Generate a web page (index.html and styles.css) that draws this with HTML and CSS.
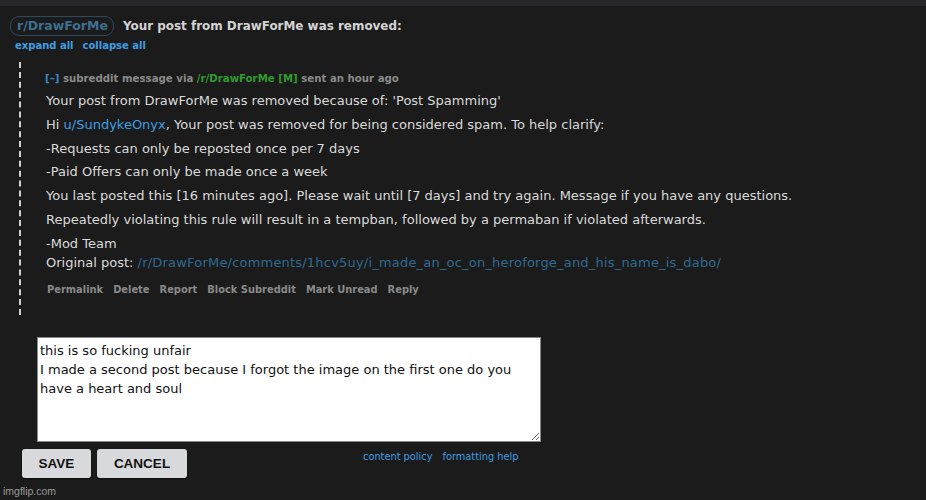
FILE: index.html
```html
<!DOCTYPE html>
<html>
<head>
<meta charset="utf-8">
<link rel="stylesheet" href="styles.css">
</head>
<body>
<div class="topbar"></div>
<div class="head">
  <span class="pill">r/DrawForMe</span>
  <span class="title">Your post from DrawForMe was removed:</span>
</div>
<div class="expand"><a>expand all</a><a>collapse all</a></div>
<div class="thread">
  <div class="msg">
    <div class="tagline"><span class="blue">[–]</span> subreddit message via <span class="green">/r/DrawForMe</span> <span class="green">[M]</span> sent an hour ago</div>
    <div class="md">
      <p>Your post from DrawForMe was removed because of: 'Post Spamming'</p>
      <p>Hi <span class="link">u/SundykeOnyx</span>, Your post was removed for being considered spam. To help clarify:</p>
      <p>-Requests can only be reposted once per 7 days</p>
      <p>-Paid Offers can only be made once a week</p>
      <p>You last posted this [16 minutes ago]. Please wait until [7 days] and try again. Message if you have any questions.</p>
      <p>Repeatedly violating this rule will result in a tempban, followed by a permaban if violated afterwards.</p>
      <p>-Mod Team<br>Original post: <span class="link dim">/r/DrawForMe/comments/1hcv5uy/i_made_an_oc_on_heroforge_and_his_name_is_dabo/</span></p>
    </div>
    <div class="buttons"><span>Permalink</span><span>Delete</span><span>Report</span><span>Block Subreddit</span><span>Mark Unread</span><span>Reply</span></div>
  </div>
</div>
<div class="reply">
  <textarea class="box">this is so fucking unfair
I made a second post because I forgot the image on the first one do you have a heart and soul</textarea>
  <div class="bottom">
    <div class="btns"><button class="btn save">SAVE</button><button class="btn cancel">CANCEL</button></div>
    <div class="help"><a>content policy</a><a>formatting help</a></div>
  </div>
</div>
<div class="wm">imgflip.com</div>
</body>
</html>
```

FILE: styles.css
```css
html, body {
  margin: 0;
  padding: 0;
  background: #1b1b1b;
  font-family: "DejaVu Sans", Verdana, sans-serif;
  width: 926px;
  height: 500px;
  overflow: hidden;
}
.topbar {
  height: 6px;
  background: #28282b;
}
.head {
  display: flex;
  align-items: center;
  gap: 9px;
  margin: 10px 0 0 10px;
  height: 20px;
}
.pill {
  border: 1px solid #2d4a60;
  border-radius: 9px;
  padding: 1px 5px 1px 6px;
  color: #3d6f92;
  font-weight: bold;
  font-size: 12.5px;
  line-height: 16px;
}
.title {
  color: #d3d3d3;
  font-weight: bold;
  font-size: 11.95px;
}
.expand {
  margin: 4px 0 0 15px;
  font-size: 10px;
  font-weight: bold;
  display: flex;
  gap: 9px;
  color: #3f9ee3;
  height: 14px;
}
.thread {
  margin: 8px 0 0 19px;
  border-left: 2px dashed #d0d0d0;
  padding: 10px 0 0 24px;
  height: 243px;
}
.tagline {
  font-size: 10.2px;
  font-weight: bold;
  color: #8a8a8a;
  line-height: 14px;
}
.blue { color: #3a86c4; }
.green { color: #2f9b2f; }
.md {
  margin-top: 5px;
  padding-left: 1px;
  color: #dadada;
  font-size: 13px;
}
.md p {
  margin: 0 0 4.3px 0;
  line-height: 19.5px;
}
.link { color: #3f9ee3; }
.link.dim { color: #2e6a92; letter-spacing: 0.2px; }
.buttons {
  margin-top: 11px;
  display: flex;
  gap: 10px;
  font-size: 9.9px;
  font-weight: bold;
  color: #8a8a8a;
  padding-left: 2px;
}
.reply {
  margin: 22px 0 0 0;
}
.box {
  display: block;
  margin-left: 37px;
  width: 504px;
  height: 105px;
  box-sizing: border-box;
  border: 1px solid #888;
  background: #fff;
  color: #111;
  font-family: "DejaVu Sans", Verdana, sans-serif;
  font-size: 13px;
  line-height: 19px;
  padding: 3px 2px 4px;
  resize: both;
  outline: none;
}
.bottom {
  display: flex;
  margin-top: 7px;
}
.btns {
  display: flex;
  gap: 6px;
  margin-left: 22px;
}
.btn {
  height: 29px;
  border: none;
  border-radius: 3px;
  background: #d8d9dc;
  box-shadow: 0 1px 2px rgba(0,0,0,0.6);
  font-family: "Liberation Sans", Arial, sans-serif;
  font-weight: bold;
  font-size: 13.5px;
  color: #111;
  padding: 0;
}
.save { width: 69px; }
.cancel { width: 90px; }
.help {
  margin-left: 176px;
  display: flex;
  gap: 10px;
  font-size: 9.8px;
  color: #3f9ee3;
  padding-top: 2px;
}
.wm {
  position: absolute;
  left: 3px;
  top: 485px;
  font-family: "Liberation Sans", Arial, sans-serif;
  font-size: 10.5px;
  color: #9a9a9a;
}
```
